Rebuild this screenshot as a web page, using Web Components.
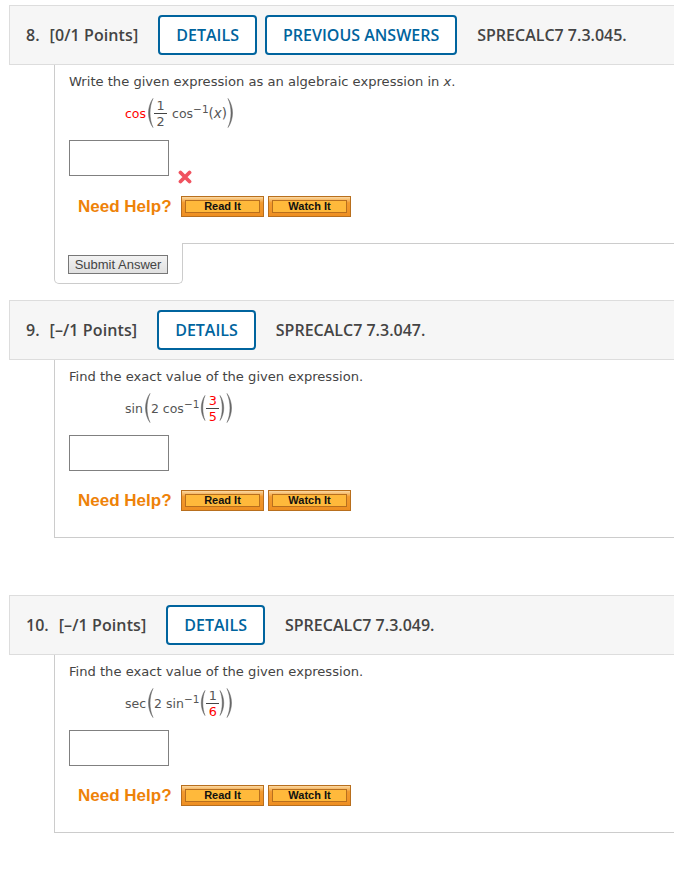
<!DOCTYPE html>
<html>
<head>
<meta charset="utf-8">
<style>
  html, body { margin: 0; background: #fff; }
  body { font-family: "DejaVu Sans", sans-serif; color: #444; }
  .x { font-style: italic; }
  .red { color: #f00; }
  sup { font-size: 10.5px; line-height: 0; vertical-align: 5px; }
  .args { font-size: 13.4px; }
</style>
</head>
<body>
<question-list>
  <question-item number="8." points="[0/1 Points]" code="SPRECALC7 7.3.045." previous submit wrong>
    <span slot="prompt">Write the given expression as an algebraic expression in <i class="x">x</i>.</span>
    <math-line slot="math" style="--offset:56px">
      <span class="red">cos</span><math-paren size="big"></math-paren><math-frac top="1" bottom="2"></math-frac><span style="margin-left:5px">cos<sup>−1</sup><span class="args">(<i>x</i>)</span></span><math-paren size="big" right></math-paren>
    </math-line>
  </question-item>
  <question-item number="9." points="[–/1 Points]" code="SPRECALC7 7.3.047.">
    <span slot="prompt">Find the exact value of the given expression.</span>
    <math-line slot="math" style="--offset:56px">
      <span>sin</span><math-paren size="big"></math-paren><span>2 cos<sup>−1</sup></span><math-paren></math-paren><math-frac top="3" bottom="5" topred bottomred></math-frac><math-paren right></math-paren><math-paren size="big" right></math-paren>
    </math-line>
  </question-item>
  <question-item number="10." points="[–/1 Points]" code="SPRECALC7 7.3.049.">
    <span slot="prompt">Find the exact value of the given expression.</span>
    <math-line slot="math" style="--offset:56px">
      <span>sec</span><math-paren size="big"></math-paren><span>2 sin<sup>−1</sup></span><math-paren></math-paren><math-frac top="1" bottom="6" bottomred></math-frac><math-paren right></math-paren><math-paren size="big" right></math-paren>
    </math-line>
  </question-item>
</question-list>

<script>
// list wrapper, just spaces the questions out
class QuestionList extends HTMLElement {
  constructor() {
    super()
    this.attachShadow({ mode: 'open' }).innerHTML = `
      <style>
        :host { display: flex; flex-direction: column; padding: 5px 0 0 9px; }
        ::slotted(question-item:nth-child(2)) { margin-top: 16px; }
        ::slotted(question-item:nth-child(3)) { margin-top: 57px; }
      </style>
      <slot></slot>`
  }
}

class MathParen extends HTMLElement {
  constructor() {
    super()
    const big = this.getAttribute('size') === 'big'
    const w = big ? 8 : 7
    const h = big ? 30 : 26
    const flip = this.hasAttribute('right') ? `transform="translate(${w} 0) scale(-1 1)"` : ''
    const end = w - 1
    this.attachShadow({ mode: 'open' }).innerHTML = `
      <style>
        :host { display: inline-flex; align-items: center; }
        svg { display: block; }
      </style>
      <svg width="${w}" height="${h}" viewBox="0 0 ${w} ${h}">
        <path ${flip} d="M${end} 0.5 C1 ${h * 0.3} 1 ${h * 0.7} ${end} ${h - 0.5} C3 ${h * 0.7} 3 ${h * 0.3} ${end} 0.5 Z" fill="#666" stroke="#666" stroke-width="0.5"/>
      </svg>`
  }
}

class MathFrac extends HTMLElement {
  constructor() {
    super()
    const topColor = this.hasAttribute('topred') ? '#f00' : 'inherit'
    const bottomColor = this.hasAttribute('bottomred') ? '#f00' : 'inherit'
    this.attachShadow({ mode: 'open' }).innerHTML = `
      <style>
        :host { display: inline-flex; flex-direction: column; align-items: center; width: 13px; line-height: 14px; font-size: 12.8px; }
        .top { border-bottom: 1px solid #444; width: 100%; text-align: center; height: 14px; line-height: 13px; }
        .bot { height: 14px; line-height: 16px; }
      </style>
      <div class="top" style="color:${topColor}">${this.getAttribute('top')}</div>
      <div class="bot" style="color:${bottomColor}">${this.getAttribute('bottom')}</div>`
  }
}

class MathLine extends HTMLElement {
  constructor() {
    super()
    this.attachShadow({ mode: 'open' }).innerHTML = `
      <style>
        :host { display: flex; align-items: center; height: 32px; padding-left: var(--offset); font-size: 12.5px; color: #555; white-space: pre; }
      </style>
      <slot></slot>`
  }
}

class HeaderButton extends HTMLElement {
  constructor() {
    super()
    this.attachShadow({ mode: 'open' }).innerHTML = `
      <style>
        :host { display: flex; align-items: center; justify-content: center; box-sizing: border-box; height: 40px; padding: 0 16px; border: 2px solid #00649e; border-radius: 4px; color: #00649e; font: 600 16px "Open Sans", sans-serif; background: #fff; }
      </style>
      <slot></slot>`
  }
}

class HelpButton extends HTMLElement {
  constructor() {
    super()
    this.attachShadow({ mode: 'open' }).innerHTML = `
      <style>
        :host { display: block; box-sizing: border-box; height: 21px; padding: 3px; border: 1px solid #b86f1e; background: linear-gradient(#fbd9a3 0, #f29a2e 30%, #ee8f22 100%); }
        div { box-sizing: border-box; height: 13px; border: 1px solid #b86f1e; background: #ffb93b; color: #111; font: bold 11px/11px "Liberation Sans", sans-serif; text-align: center; }
      </style>
      <div><slot></slot></div>`
  }
}

class NeedHelp extends HTMLElement {
  constructor() {
    super()
    this.attachShadow({ mode: 'open' }).innerHTML = `
      <style>
        :host { display: flex; align-items: center; height: 21px; padding-left: 9px; }
        .label { width: 103px; color: #ee8208; font: bold 17px "Liberation Sans", sans-serif; white-space: nowrap; }
        help-button.read { width: 83px; }
        help-button.watch { width: 83px; margin-left: 4px; }
      </style>
      <span class="label">Need Help?</span>
      <help-button class="read">Read It</help-button>
      <help-button class="watch">Watch It</help-button>`
  }
}

class QuestionItem extends HTMLElement {
  constructor() {
    super()
    const previous = this.hasAttribute('previous')
    const wrong = this.hasAttribute('wrong')
    const submit = this.hasAttribute('submit')
    this.attachShadow({ mode: 'open' }).innerHTML = `
      <style>
        :host { display: block; }
        header {
          display: flex; align-items: center; box-sizing: border-box; height: 60px;
          padding-left: 16px; background: #f6f6f6;
          border: 1px solid #ddd; border-right: 0;
          font: 600 16px "Open Sans", sans-serif; color: #444;
        }
        .num { white-space: pre; }
        .points { margin-left: 10px; margin-right: 20px; white-space: nowrap; letter-spacing: .1px; }
        .btns { display: flex; gap: 8px; }
        .code { margin-left: 20px; white-space: nowrap; }
        .wrap { margin-left: 45px; }
        .main { border-left: 1px solid #ccc; padding-left: 14px; box-sizing: border-box; }
        .main.closed { border-bottom: 1px solid #ccc; height: 178px; }
        .main.open { padding-bottom: 26px; }
        .prompt { font-size: 13.1px; line-height: 16px; padding-top: 9px; height: 23px; color: #444; }
        .answer { display: flex; align-items: flex-start; margin-top: 11px; }
        .input { box-sizing: border-box; width: 100px; height: 36px; border: 1px solid #808080; background: #fff; }
        svg.wrong { display: block; margin: 30px 0 0 9px; }
        need-help { margin-top: 19px; }
        need-help.after-wrong { margin-top: 12px; }
        .footer { display: flex; }
        .tab { box-sizing: border-box; width: 129px; height: 41px; padding: 12px 0 0 13px; border: 1px solid #ccc; border-top: 0; border-radius: 0 0 5px 5px; }
        .rest { flex: 1; border-top: 1px solid #ccc; }
        .submit { box-sizing: border-box; width: 100px; height: 19px; border: 1px solid #777; background: linear-gradient(#f2f2f2, #e0e0e0); font: 13px/17px "Liberation Sans", sans-serif; color: #444; text-align: center; white-space: nowrap; }
      </style>
      <header>
        <span class="num">${this.getAttribute('number')}</span>
        <span class="points">${this.getAttribute('points')}</span>
        <div class="btns">
          <header-button>DETAILS</header-button>
          ${previous ? '<header-button>PREVIOUS ANSWERS</header-button>' : ''}
        </div>
        <span class="code">${this.getAttribute('code')}</span>
      </header>
      <div class="wrap">
        <div class="main ${submit ? 'open' : 'closed'}">
          <div class="prompt"><slot name="prompt"></slot></div>
          <slot name="math"></slot>
          <div class="answer">
            <div class="input"></div>
            ${wrong ? `<svg class="wrong" width="14" height="14" viewBox="0 0 14 14"><path d="M2.5 2.5 L11.5 11.5 M11.5 2.5 L2.5 11.5" stroke="#f0525f" stroke-width="3.8" stroke-linecap="round"/></svg>` : ''}
          </div>
          <need-help class="${wrong ? 'after-wrong' : ''}"></need-help>
        </div>
        ${submit ? `<div class="footer"><div class="tab"><div class="submit">Submit Answer</div></div><div class="rest"></div></div>` : ''}
      </div>`
  }
}

customElements.define('math-paren', MathParen)
customElements.define('math-frac', MathFrac)
customElements.define('math-line', MathLine)
customElements.define('header-button', HeaderButton)
customElements.define('help-button', HelpButton)
customElements.define('need-help', NeedHelp)
customElements.define('question-item', QuestionItem)
customElements.define('question-list', QuestionList)
</script>
</body>
</html>
